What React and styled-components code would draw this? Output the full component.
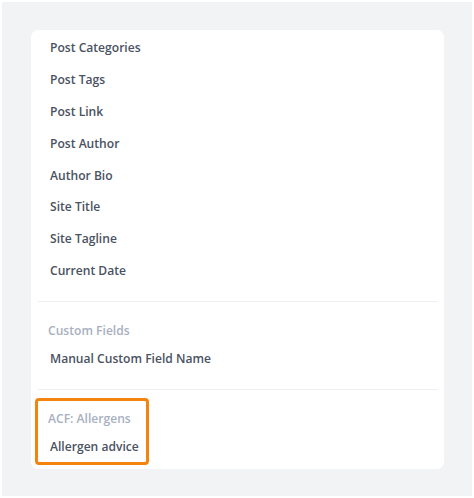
import React from 'react'
import styled,{createGlobalStyle} from "styled-components"

const GlobalStyle=createGlobalStyle`
 html,body{margin:0;padding:0;background:#fff;}
 body{font-family:"Open Sans","Liberation Sans",sans-serif;}
`

const Page=styled.div`
 margin:2px;
 height:494px;
 box-sizing:border-box;
 background:#f2f3f5;
 padding:28px 28px 29px 29px;
`

const Card=styled.div`
 background:#fff;
 border-radius:7px;
 padding:2px 7px 4px;
 display:flex;
 flex-direction:column;
`

const Group=styled.div`
 display:flex;
 flex-direction:column;
 padding-top:${props=>props.top || 0}px;
 padding-bottom:${props=>props.bottom || 0}px;
`

const Highlight=styled.div`
 display:flex;
 flex-direction:column;
 align-self:flex-start;
 margin:8px 0 0 -3px;
 padding:3px 7px 2px 0;
 border:3px solid #f5840f;
 border-radius:4px;
`

const Item=styled.div`
 height:${props=>props.h || 28}px;
 display:flex;
 align-items:center;
 padding-left:12px;
 font-size:12.1px;
 font-weight:600;
 color:#4a5262;
 white-space:nowrap;
`

const Heading=styled(Item)`
 padding-left:10px;
 color:#a8b0bf;
`

const Divider=styled.div`
 height:1px;
 background:#eceef1;
`

const postItems=["Post Categories","Post Tags","Post Link","Post Author","Author Bio","Site Title","Site Tagline","Current Date"]

function App() {
 return (
  <>
   <GlobalStyle/>
   <Page>
    <Card>
     <Group bottom={15}>
      {postItems.map((item)=>(
       <Item key={item} h={31.8}>{item}</Item>
      ))}
     </Group>
     <Divider/>
     <Group top={14} bottom={17}>
      <Heading>Custom Fields</Heading>
      <Item>Manual Custom Field Name</Item>
     </Group>
     <Divider/>
     <Highlight>
      <Heading>ACF: Allergens</Heading>
      <Item>Allergen advice</Item>
     </Highlight>
    </Card>
   </Page>
  </>
 )
}

export default App
